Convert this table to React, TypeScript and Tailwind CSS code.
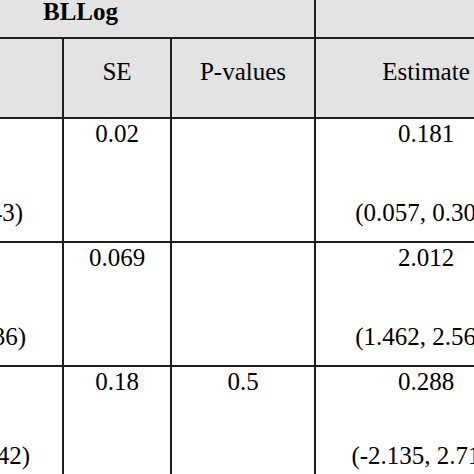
import { Fragment } from "react";

const rows = [
  {
    left: "(0.121, 0.143)",
    leftPad: "pr-[39px]",
    se: "0.02",
    p: "",
    est: "0.181",
    ci: "(0.057, 0.305)",
    gap: "mt-[54px]",
  },
  {
    left: "(1.590, 2.436)",
    leftPad: "pr-[36px]",
    se: "0.069",
    p: "",
    est: "2.012",
    ci: "(1.462, 2.562)",
    gap: "mt-[54px]",
  },
  {
    left: "(-0.312, 0.742)",
    leftPad: "pr-[32px]",
    se: "0.18",
    p: "0.5",
    est: "0.288",
    ci: "(-2.135, 2.711)",
    gap: "mt-[49px]",
  },
];

export default function App() {
  return (
    <div className="w-[474px] h-[474px] overflow-hidden bg-white">
      <div
        className="grid grid-cols-[62px_106px_142px_220px] grid-rows-[37px_78px_122px_122px_122px] gap-[2px] bg-[#1e1e1e] w-max text-[25px] leading-[25px] text-black"
        style={{ fontFamily: '"Liberation Serif", "Times New Roman", serif' }}
      >
        <div className="col-span-3 bg-[#e3e3e3] pl-[43px] font-bold leading-[23px]">
          BLLog
        </div>
        <div className="bg-[#e3e3e3]" />

        <div className="bg-[#e3e3e3]" />
        <div className="bg-[#e3e3e3] pt-[20px] text-center">SE</div>
        <div className="bg-[#e3e3e3] pt-[20px] text-center">P-values</div>
        <div className="bg-[#e3e3e3] pt-[20px] text-center">Estimate</div>

        {rows.map((r) => (
          <Fragment key={r.est}>
            <div
              className={`bg-white pt-[2px] flex flex-col overflow-hidden ${r.leftPad}`}
            >
              <div className="h-[25px]" />
              <div className={`${r.gap} flex justify-end whitespace-nowrap`}>
                <span className="shrink-0">{r.left}</span>
              </div>
            </div>
            <div className="bg-white pt-[2px] text-center">{r.se}</div>
            <div className="bg-white pt-[2px] text-center">{r.p}</div>
            <div className="bg-white pt-[2px] flex flex-col items-center whitespace-nowrap">
              <div className="h-[25px]">{r.est}</div>
              <div className={r.gap}>{r.ci}</div>
            </div>
          </Fragment>
        ))}
      </div>
    </div>
  );
}
